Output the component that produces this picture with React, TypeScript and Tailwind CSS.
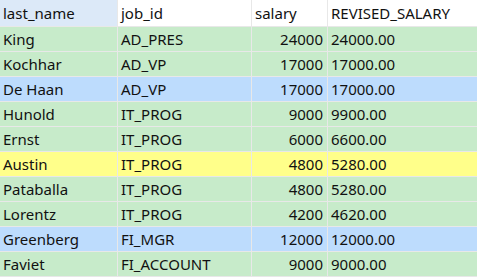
import React from 'react';

type Row = { name: string; job: string; salary: number; revised: string; tone: 'green' | 'blue' | 'yellow' };

const rows: Row[] = [
  { name: 'King', job: 'AD_PRES', salary: 24000, revised: '24000.00', tone: 'green' },
  { name: 'Kochhar', job: 'AD_VP', salary: 17000, revised: '17000.00', tone: 'green' },
  { name: 'De Haan', job: 'AD_VP', salary: 17000, revised: '17000.00', tone: 'blue' },
  { name: 'Hunold', job: 'IT_PROG', salary: 9000, revised: '9900.00', tone: 'green' },
  { name: 'Ernst', job: 'IT_PROG', salary: 6000, revised: '6600.00', tone: 'green' },
  { name: 'Austin', job: 'IT_PROG', salary: 4800, revised: '5280.00', tone: 'yellow' },
  { name: 'Pataballa', job: 'IT_PROG', salary: 4800, revised: '5280.00', tone: 'green' },
  { name: 'Lorentz', job: 'IT_PROG', salary: 4200, revised: '4620.00', tone: 'green' },
  { name: 'Greenberg', job: 'FI_MGR', salary: 12000, revised: '12000.00', tone: 'blue' },
  { name: 'Faviet', job: 'FI_ACCOUNT', salary: 9000, revised: '9000.00', tone: 'green' },
];

const toneClass = {
  green: 'bg-[#c7ebca]',
  blue: 'bg-[#bddcfd]',
  yellow: 'bg-[#ffff8a]',
};

export default function App() {
  return (
    <div
      className="w-[477px] h-[277px] overflow-hidden bg-[#e8e8e8] text-[15px] text-[#111] grid grid-cols-[117px_133px_75px_149px] auto-rows-[24px] grid-rows-[26px] gap-px leading-none"
      style={{ fontFamily: '"Noto Sans", "Open Sans", sans-serif' }}
    >
      {/* header */}
      <div className="bg-[#dce9f8] pl-[3px] flex items-center">last_name</div>
      <div className="bg-white pl-[3px] flex items-center">job_id</div>
      <div className="bg-white pl-[3px] flex items-center">salary</div>
      <div className="bg-white pl-[3px] flex items-center">REVISED_SALARY</div>

      {rows.map((r) => (
        <React.Fragment key={r.name}>
          <div className={`${toneClass[r.tone]} pl-[3px] flex items-center`}>{r.name}</div>
          <div className={`${toneClass[r.tone]} pl-[3px] flex items-center`}>{r.job}</div>
          <div className={`${toneClass[r.tone]} pr-[4px] flex items-center justify-end`}>{r.salary}</div>
          <div className={`${toneClass[r.tone]} pl-[3px] flex items-center`}>{r.revised}</div>
        </React.Fragment>
      ))}
    </div>
  );
}
